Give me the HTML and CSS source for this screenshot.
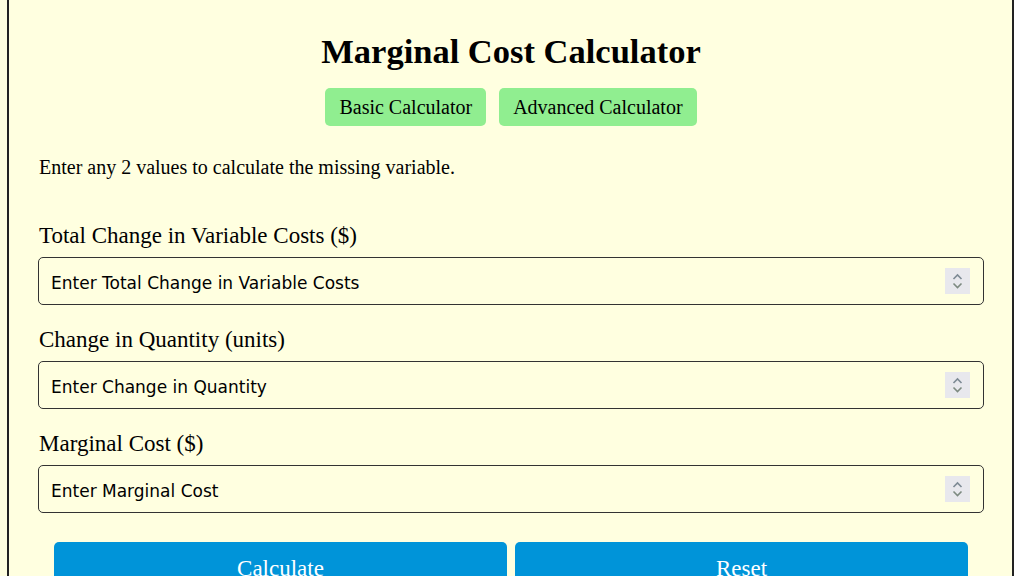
FILE: index.html
```html
<!DOCTYPE html>
<html lang="en">
<head>
<meta charset="utf-8">
<title>Marginal Cost Calculator</title>
<link rel="stylesheet" href="styles.css">
</head>
<body>
<div class="container">
  <h1 class="title">Marginal Cost Calculator</h1>
  <div class="tabs">
    <button class="tab">Basic Calculator</button>
    <button class="tab">Advanced Calculator</button>
  </div>
  <p class="intro">Enter any 2 values to calculate the missing variable.</p>
  <div class="field">
    <label class="label" for="tc">Total Change in Variable Costs ($)</label>
    <div class="input-wrap">
      <input class="input" id="tc" type="text" inputmode="decimal" placeholder="Enter Total Change in Variable Costs">
      <span class="spinner"><svg width="25" height="26" viewBox="0 0 25 26"><path d="M8.5 11 L12.5 7 L16.5 11" fill="none" stroke="#7d8a94" stroke-width="1.6"/><path d="M8.5 15.5 L12.5 19.5 L16.5 15.5" fill="none" stroke="#7d8a80" stroke-width="1.6"/></svg></span>
    </div>
  </div>
  <div class="field">
    <label class="label" for="cq">Change in Quantity (units)</label>
    <div class="input-wrap">
      <input class="input" id="cq" type="text" inputmode="decimal" placeholder="Enter Change in Quantity">
      <span class="spinner"><svg width="25" height="26" viewBox="0 0 25 26"><path d="M8.5 11 L12.5 7 L16.5 11" fill="none" stroke="#7d8a94" stroke-width="1.6"/><path d="M8.5 15.5 L12.5 19.5 L16.5 15.5" fill="none" stroke="#7d8a80" stroke-width="1.6"/></svg></span>
    </div>
  </div>
  <div class="field">
    <label class="label" for="mc">Marginal Cost ($)</label>
    <div class="input-wrap">
      <input class="input" id="mc" type="text" inputmode="decimal" placeholder="Enter Marginal Cost">
      <span class="spinner"><svg width="25" height="26" viewBox="0 0 25 26"><path d="M8.5 11 L12.5 7 L16.5 11" fill="none" stroke="#7d8a94" stroke-width="1.6"/><path d="M8.5 15.5 L12.5 19.5 L16.5 15.5" fill="none" stroke="#7d8a80" stroke-width="1.6"/></svg></span>
    </div>
  </div>
  <div class="actions">
    <button class="action">Calculate</button>
    <button class="action">Reset</button>
  </div>
</div>
</body>
</html>
```

FILE: styles.css
```css
html {
  background: #ffffff;
}
body {
  margin: 0;
  width: 1014px;
  min-height: 100vh;
  background: #ffffe0;
  font-family: "Liberation Serif", "Times New Roman", serif;
  color: #000;
}
.container {
  margin-left: 7px;
  border-left: 2px solid #222;
  border-right: 2px solid #222;
  padding: 0 28px 0 29px;
  min-height: 600px;
}
.title {
  margin: 0;
  padding-top: 31px;
  font-size: 34.5px;
  line-height: 40px;
  text-align: center;
  font-weight: bold;
}
.tabs {
  display: flex;
  justify-content: center;
  gap: 13px;
  margin-top: 17px;
}
.tab {
  background: #90ee90;
  border: none;
  border-radius: 5px;
  height: 38px;
  padding: 0 14px;
  font-family: "Liberation Serif", "Times New Roman", serif;
  font-size: 20px;
  color: #000;
}
.intro {
  margin: 30px 0 0 1px;
  font-size: 20px;
  line-height: 22px;
}
.field {
  display: flex;
  flex-direction: column;
}
.label {
  margin-top: 22px;
  margin-left: 1px;
  margin-bottom: 8px;
  font-size: 23px;
  line-height: 26px;
}
.intro + .field .label {
  margin-top: 45px;
}
.input-wrap {
  position: relative;
}
.input {
  display: block;
  box-sizing: border-box;
  height: 48px;
  width: 100%;
  border: 1px solid #333;
  border-radius: 5px;
  background: #ffffe0;
  padding: 3px 50px 0 12px;
  font-family: "DejaVu Sans", Verdana, sans-serif;
  font-size: 17px;
  color: #000;
}
.input::placeholder {
  color: #000;
  opacity: 1;
}
.spinner {
  position: absolute;
  right: 14px;
  top: 11px;
  width: 25px;
  height: 26px;
  background: #e8e8ed;
  display: flex;
}
.actions {
  display: flex;
  gap: 8px;
  margin: 29px 16px 0;
}
.action {
  flex: 1;
  height: 54px;
  border: none;
  border-radius: 5px;
  background: #0094d9;
  color: #fff;
  font-family: "Liberation Serif", "Times New Roman", serif;
  font-size: 23px;
}
```
